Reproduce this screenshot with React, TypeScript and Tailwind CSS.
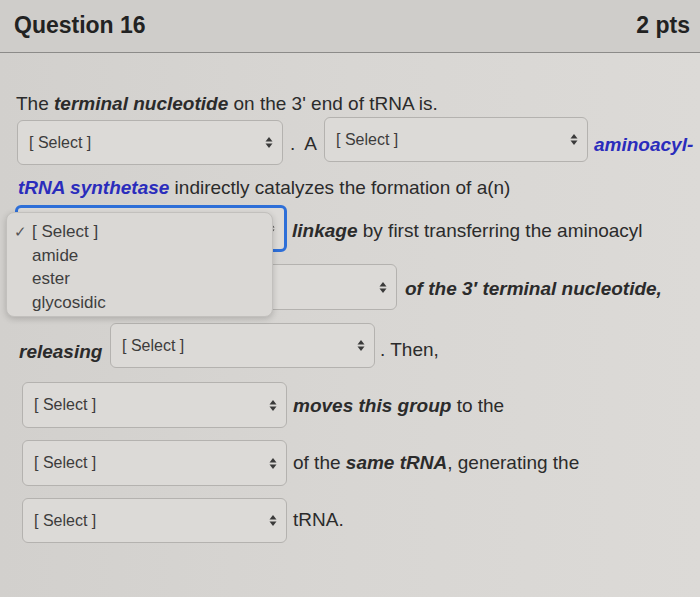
import React from "react";

const Arrows = () => (
  <svg width="8" height="13" viewBox="0 0 8 13" className="shrink-0">
    <path d="M4 1 L7.5 5.5 L0.5 5.5 Z" fill="#3a3a3a" />
    <path d="M4 12 L7.5 7.5 L0.5 7.5 Z" fill="#3a3a3a" />
  </svg>
);

interface SelectProps {
  className: string;
  label?: string;
}

const SelectBox = ({ className, label = "[ Select ]" }: SelectProps) => (
  <div
    className={`flex items-center justify-between rounded-[6px] bg-[#dcdad7] pl-[11px] pr-[9px] text-[16px] text-[#3c3c3c] shrink-0 ${className}`}
  >
    <span>{label}</span>
    <Arrows />
  </div>
);

export default function App() {
  const options = ["[ Select ]", "amide", "ester", "glycosidic"];

  return (
    <div className="relative w-[700px] h-[597px] overflow-hidden bg-gradient-to-r from-[#d2d0cd] via-[#d8d6d3] to-[#dcdad7] font-['Liberation_Sans',Arial,sans-serif] text-[#2b2b2b]">
      {/* Header */}
      <div className="flex h-[53px] items-center justify-between border-b border-[#8c8b89] bg-[#cfcdca] pl-[14px] pr-[10px] pb-[2px]">
        <h1 className="text-[23px] font-bold text-[#222]">Question 16</h1>
        <span className="text-[23px] font-bold text-[#222]">2 pts</span>
      </div>

      {/* Body */}
      <div className="flex flex-col text-[19px]">
        <p className="mt-[40px] h-[22px] pl-[16px] leading-[22px]">
          The <b><i>terminal nucleotide</i></b> on the 3' end of tRNA is.
        </p>

        <div className="mt-[2px] flex h-[48px] items-start">
          <SelectBox className="ml-[17px] mt-[3px] h-[45px] w-[266px] border border-[#b4b2af]" />
          <span className="ml-[7px] mt-[16px] w-[34px] leading-[22px]">
            .<span className="ml-[9px]">A</span>
          </span>
          <SelectBox className="h-[45px] w-[264px] border border-[#b4b2af]" />
          <span className="ml-[6px] mt-[17px] font-bold italic leading-[22px] text-[#2a2cbc]">aminoacyl-</span>
        </div>

        <p className="mt-[12px] h-[22px] pl-[18px] leading-[22px]">
          <b><i className="text-[#2a2cbc]">tRNA synthetase</i></b> indirectly catalyzes the formation of a(n)
        </p>

        <div className="mt-[6px] flex h-[47px] items-center">
          <SelectBox label="" className="ml-[15px] h-[47px] w-[272px] border-[3px] border-[#2e6fd8]" />
          <span className="ml-[5px] mt-[6px]">
            <b><i>linkage</i></b> by first transferring the aminoacyl
          </span>
        </div>

        <div className="mt-[12px] flex h-[46px] items-center">
          <SelectBox label="" className="ml-[132px] h-[46px] w-[265px] border border-[#b4b2af]" />
          <span className="ml-[8px] mt-[5px] font-bold italic">of the 3′ terminal nucleotide,</span>
        </div>

        <div className="mt-[13px] flex h-[45px] items-center">
          <span className="ml-[19px] mt-[14px] w-[91px] font-bold italic">releasing</span>
          <SelectBox className="h-[45px] w-[265px] border border-[#b4b2af]" />
          <span className="ml-[5px] mt-[10px]">. Then,</span>
        </div>

        <div className="mt-[14px] flex h-[46px] items-center">
          <SelectBox className="ml-[22px] h-[46px] w-[265px] border border-[#b4b2af]" />
          <span className="ml-[6px] mt-[2px]">
            <b><i>moves this group</i></b> to the
          </span>
        </div>

        <div className="mt-[12px] flex h-[46px] items-center">
          <SelectBox className="ml-[22px] h-[46px] w-[265px] border border-[#b4b2af]" />
          <span className="ml-[6px]">
            of the <b><i>same tRNA</i></b>, generating the
          </span>
        </div>

        <div className="mt-[12px] flex h-[45px] items-center">
          <SelectBox className="ml-[22px] h-[45px] w-[265px] border border-[#b4b2af]" />
          <span className="ml-[6px]">tRNA.</span>
        </div>
      </div>

      {/* Open dropdown menu */}
      <div className="absolute left-[6px] top-[212px] h-[105px] w-[267px] rounded-[8px] border border-[#c2c0bd] bg-[#dad8d5] pt-[7px] text-[17px] text-[#3e3e3e] shadow-[0_2px_6px_rgba(0,0,0,0.18)]">
        {options.map((opt, i) => (
          <div key={opt} className="flex h-[23.5px] items-center">
            <span className="w-[25px] pl-[7px] text-[15px] text-[#555]">{i === 0 ? "✓" : ""}</span>
            <span>{opt}</span>
          </div>
        ))}
      </div>
    </div>
  );
}
